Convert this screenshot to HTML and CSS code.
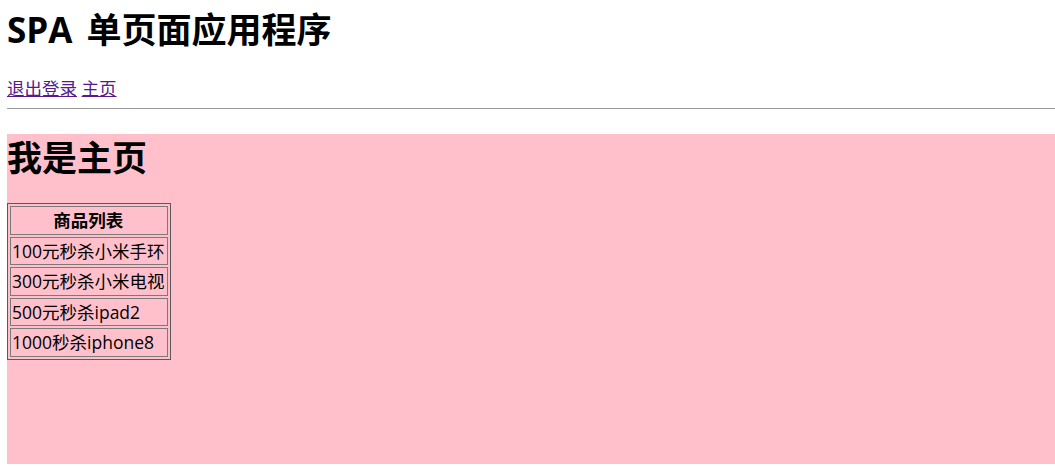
FILE: index.html
```html
<!DOCTYPE html>
<html lang="zh-CN">
<head>
<meta charset="utf-8">
<title>SPA 单页面应用程序</title>
<link rel="stylesheet" href="styles.css">
</head>
<body>
<h1 class="title">SPA 单页面应用程序</h1>
<p class="nav"><a href="#logout">退出登录</a> <a href="#home">主页</a></p>
<hr class="rule">
<div class="home">
  <h2 class="home-title">我是主页</h2>
  <table class="goods">
    <tr><th>商品列表</th></tr>
    <tr><td>100元秒杀小米手环</td></tr>
    <tr><td>300元秒杀小米电视</td></tr>
    <tr><td>500元秒杀ipad2</td></tr>
    <tr><td>1000秒杀iphone8</td></tr>
  </table>
</div>
</body>
</html>
```
FILE: styles.css
```css
html, body {
  background: #ffffff;
}
body {
  margin: 0 0 0 7px;
  font-family: "Open Sans", "Noto Sans CJK SC", sans-serif;
  font-size: 17.5px;
  color: #000;
  overflow: hidden;
}
.title {
  margin: 7px 0 0;
  font-size: 35px;
  line-height: 46px;
  font-weight: 700;
  word-spacing: 5px;
}
.nav {
  margin: 23px 0 0;
  line-height: 24px;
}
.nav a {
  color: #551a8b;
  text-decoration: underline;
}
.rule {
  margin: 8px 0 0;
  border: 0;
  border-top: 1px solid #9a9a9a;
  height: 0;
}
.home {
  margin-top: 25px;
  background: #ffc0cb;
  height: 330px;
  padding-top: 1px;
  box-sizing: border-box;
}
.home-title {
  margin: 0;
  font-size: 35px;
  line-height: 46px;
  font-weight: 700;
}
.goods {
  margin-top: 22px;
  border: 1px solid #5a5a5a;
  border-spacing: 2px;
}
.goods th,
.goods td {
  border: 1px solid #7a7a7a;
  padding: 1px 2px 1px 1px;
  line-height: 24.5px;
  font-size: 17.5px;
  white-space: nowrap;
}
.goods th {
  font-weight: 700;
  text-align: center;
}
.goods td {
  text-align: left;
}
```
